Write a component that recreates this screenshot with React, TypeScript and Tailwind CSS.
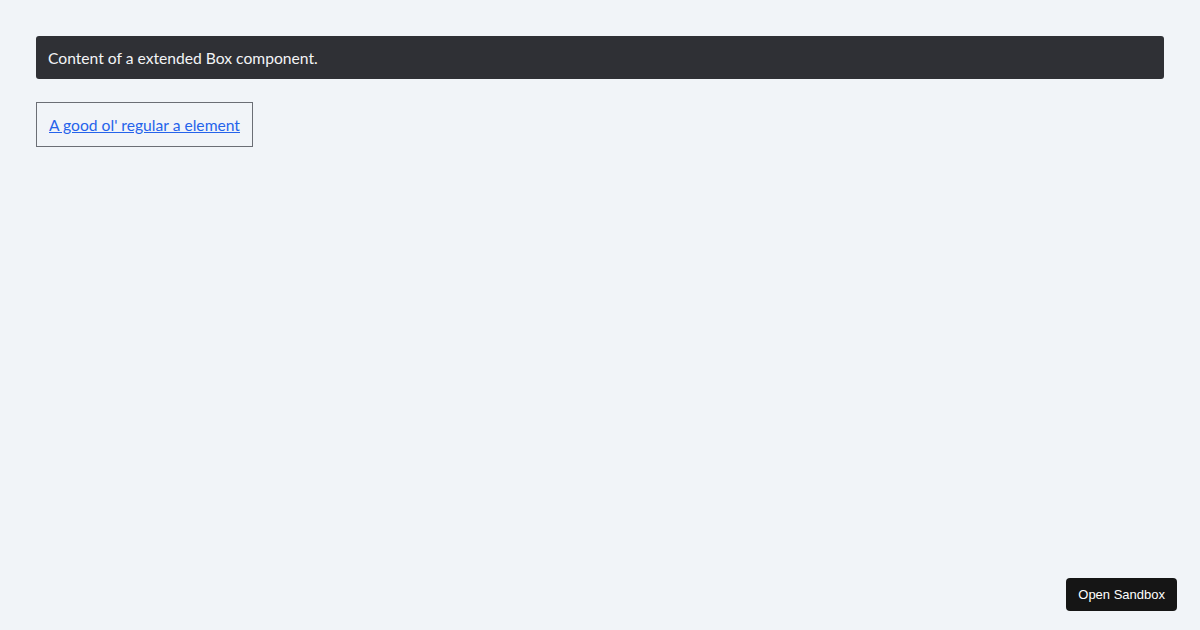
export default function App() {
  return (
    <div className="min-h-screen bg-[#f1f4f8] p-9 font-['Lato','Noto_Sans',sans-serif] text-[15.65px]">
      <div className="rounded-[3px] bg-[#2f3035] px-3 pt-[13px] pb-[11px] leading-[19px] text-[#f3f4f6]">
        Content of a extended Box component.
      </div>
      <div className="mt-[23px] flex">
        <div className="border border-[#6b6e75] px-3 pt-[13px] pb-[11px] leading-[19px]">
          <a href="#" className="text-[#2563eb] underline">
            A good ol' regular a element
          </a>
        </div>
      </div>
      <button className="fixed bottom-[19px] right-[23px] h-[33px] rounded-[4px] bg-[#151515] px-3 font-['Liberation_Sans',Arial,sans-serif] text-[13px] text-white">
        Open Sandbox
      </button>
    </div>
  )
}
